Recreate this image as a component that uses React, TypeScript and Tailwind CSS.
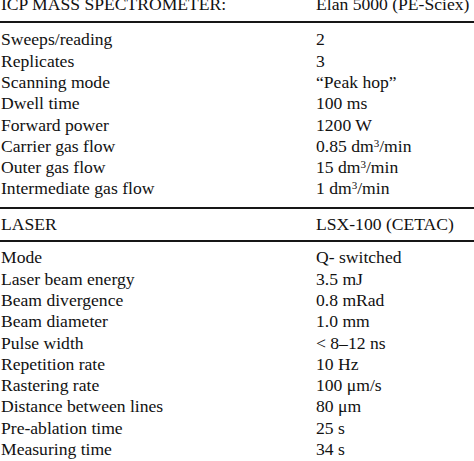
const Sup = ({ children }: { children: React.ReactNode }) => (
  <span className="relative top-[-5px] text-[11px] leading-none">{children}</span>
);

const ICP_ROWS: [string, React.ReactNode][] = [
  ['Sweeps/reading', '2'],
  ['Replicates', '3'],
  ['Scanning mode', '\u201CPeak hop\u201D'],
  ['Dwell time', '100 ms'],
  ['Forward power', '1200 W'],
  ['Carrier gas flow', <>0.85 dm<Sup>3</Sup>/min</>],
  ['Outer gas flow', <>15 dm<Sup>3</Sup>/min</>],
  ['Intermediate gas flow', <>1 dm<Sup>3</Sup>/min</>],
];

const LASER_ROWS: [string, React.ReactNode][] = [
  ['Mode', 'Q- switched'],
  ['Laser beam energy', '3.5 mJ'],
  ['Beam divergence', '0.8 mRad'],
  ['Beam diameter', '1.0 mm'],
  ['Pulse width', '< 8\u201312 ns'],
  ['Repetition rate', '10 Hz'],
  ['Rastering rate', '100 \u03BCm/s'],
  ['Distance between lines', '80 \u03BCm'],
  ['Pre-ablation time', '25 s'],
  ['Measuring time', '34 s'],
];

function Row({ label, value }: { label: string; value: React.ReactNode }) {
  return (
    <div className="flex h-[21.3px] items-baseline whitespace-nowrap">
      <div className="w-[316px] shrink-0 pl-[1px]">{label}</div>
      <div>{value}</div>
    </div>
  );
}

export default function App() {
  return (
    <div
      className="w-[474px] h-[461px] overflow-hidden bg-white text-[#111] text-[17.6px] leading-[21.3px]"
      style={{ fontFamily: '"Liberation Serif", "Times New Roman", serif' }}
    >
      <div className="-mt-[5.6px]">
        <Row label="ICP MASS SPECTROMETER:" value="Elan 5000 (PE-Sciex)" />
      </div>
      <div className="mt-[5.3px] h-[2px] bg-[#161616]" />
      <div className="pt-[6.4px] pb-[7.2px]">
        {ICP_ROWS.map(([l, v]) => (
          <Row key={l} label={l} value={v} />
        ))}
      </div>
      <div className="h-[2px] bg-[#161616]" />
      <div className="pt-[5.1px] pb-[4.6px]">
        <Row label="LASER" value="LSX-100 (CETAC)" />
      </div>
      <div className="h-[2px] bg-[#161616]" />
      <div className="pt-[5.4px]">
        {LASER_ROWS.map(([l, v]) => (
          <Row key={l} label={l} value={v} />
        ))}
      </div>
    </div>
  );
}
